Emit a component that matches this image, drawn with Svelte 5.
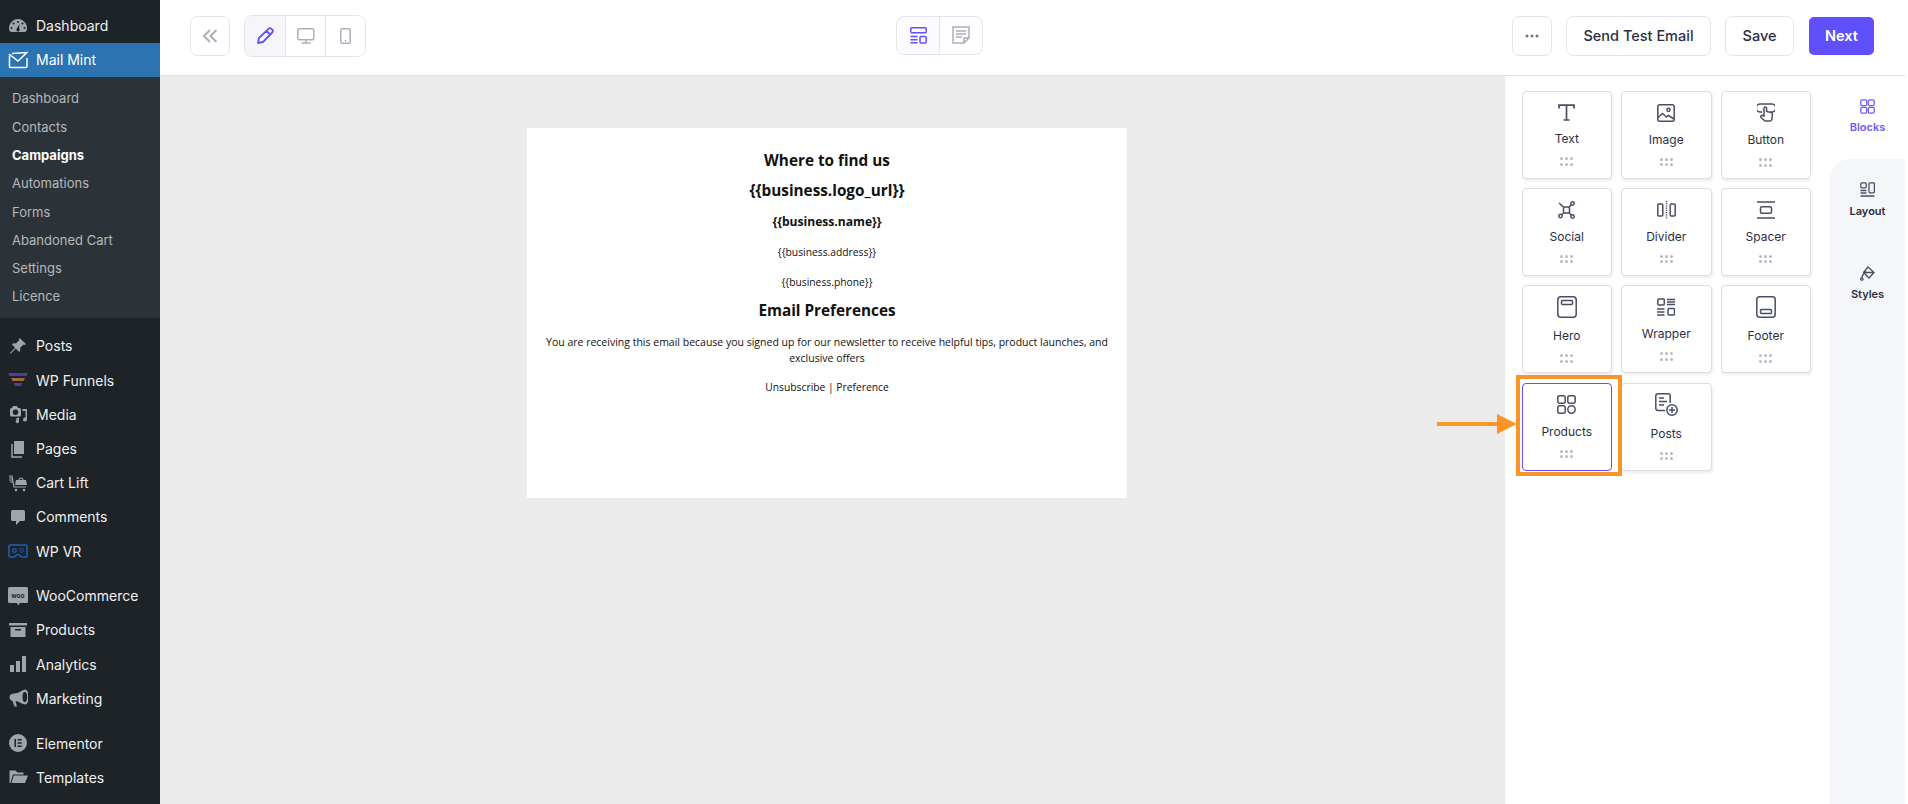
<script>
  const gray = '#a0a5aa';

  const menuIcons = {
    gauge: `<path fill="${gray}" fill-rule="evenodd" d="M10 3a9 9 0 0 0-8.600 11.600c.3.9 1 1.400 1.800 1.400h13.600c.8 0 1.500-.5 1.800-1.400A9 9 0 0 0 10 3zM10 5a1 1 0 1 1 0 2 1 1 0 0 1 0-2zM5.500 6.500a1 1 0 1 1 0 2 1 1 0 0 1 0-2zM14.500 6.500a1 1 0 1 1 0 2 1 1 0 0 1 0-2zM3.500 11a1 1 0 1 1 0 2 1 1 0 0 1 0-2zM16.500 11a1 1 0 1 1 0 2 1 1 0 0 1 0-2zM11.500 8l-.4 4.600a1.600 1.600 0 1 1-2.200 0z"/>`,
    mail: `<path fill="none" stroke="#fff" stroke-width="1.500" d="M1.500 5.500v11a1 1 0 0 0 1 1h15.500a1 1 0 0 0 1-1V8M1 4l9 7 9-8.500L4 3.500"/>`,
    pin: `<path fill="${gray}" d="M11.500 2l6.500 6-1.500 1-1-.5-3.500 3.500c.5 1.500.2 3-.8 4L7.800 12.500 3 17.500l-1 .2.300-1L7 11.700 3.800 8.300c1-1 2.500-1.300 4-.8L11.300 4l-.4-1z"/>`,
    funnel: `<path fill="#4f3d9e" d="M0 3h20l-1.600 3H1.600z"/><path fill="#a8673f" d="M3 8h14l-1.500 3h-11z"/><path fill="#4f3d9e" d="M5.500 13h9l-1.500 3H7z"/>`,
    media: `<path fill="${gray}" fill-rule="evenodd" d="M5 2h4l1 2h1.500A1.500 1.500 0 0 1 13 5.500V11a1.500 1.500 0 0 1-1.500 1.500h-8A1.500 1.500 0 0 1 2 11V5.500A1.500 1.500 0 0 1 3.500 4H4zM7.500 5.500a2.700 2.700 0 1 0 0 5.400 2.700 2.700 0 0 0 0-5.400z"/><path fill="${gray}" d="M14.500 5H19v10.500a2 2 0 1 1-1.500-1.900V7h-3zM8 14.500l3-1v4a1.700 1.700 0 1 1-1.500-1.700v-.5l-1.500.4z"/>`,
    pages: `<path fill="${gray}" d="M6 2h10v13H6z"/><path fill="none" stroke="${gray}" stroke-width="1.500" d="M4 5v13h10"/>`,
    cart: `<path fill="none" stroke="${gray}" stroke-width="1.200" d="M1 3h3l2 11h12M1 5h3M1 7h3.300M2 9h2.700"/><path fill="${gray}" d="M8 7h2.500a2.500 2.500 0 0 1 5 0H18l1 5H7zM11.500 7h3a1.500 1.500 0 0 0-3 0z"/><circle cx="8" cy="17" r="1.300" fill="${gray}"/><circle cx="16" cy="17" r="1.300" fill="${gray}"/>`,
    comment: `<path fill="${gray}" d="M4.500 3h11A1.500 1.500 0 0 1 17 4.500v8a1.500 1.500 0 0 1-1.500 1.500H12l-4 4v-4H4.500A1.500 1.500 0 0 1 3 12.500v-8A1.500 1.500 0 0 1 4.500 3z"/>`,
    vr: `<path fill="none" stroke="#2060b0" stroke-width="1.600" d="M2.500 4h15A1.500 1.500 0 0 1 19 5.500v9a1.500 1.500 0 0 1-1.500 1.500H14c-1.500 0-2-2.500-4-2.500S7.500 16 6 16H2.500A1.500 1.500 0 0 1 1 14.500v-9A1.500 1.500 0 0 1 2.500 4z"/><circle cx="6.500" cy="9.500" r="1.800" fill="none" stroke="#2060b0" stroke-width="1.300"/><circle cx="13.500" cy="9.500" r="1.800" fill="none" stroke="#2b3fa8" stroke-width="1.300"/>`,
    woo: `<path fill="${gray}" d="M1.500 1h17A1.500 1.500 0 0 1 20 2.500v13a1.500 1.500 0 0 1-1.500 1.500H12l-2 2.500-1-2.500H1.500A1.500 1.500 0 0 1 0 15.500v-13A1.500 1.500 0 0 1 1.500 1z"/><text x="10" y="11.500" font-size="6.500" font-weight="700" text-anchor="middle" fill="#1d2327" font-family="Liberation Sans, sans-serif">woo</text>`,
    box: `<path fill="${gray}" fill-rule="evenodd" d="M1 3h18v2.500H1zM2.500 7h15v10h-15zM7 9v1.500h6V9z"/>`,
    bars: `<path fill="${gray}" d="M2 11h4v7H2zM8 7h4v11H8zM14 2h4v16h-4z"/>`,
    megaphone: `<path fill="${gray}" fill-rule="evenodd" d="M17 1.500a4 7.500 0 0 1 0 15c-2 0-6-3-9.500-3.500L9 18.500H6.500L4.500 13C2.800 12.800 1.500 11 1.500 9s2-3.500 5-3.500c4 0 8.500-4 10.500-4zM16.800 4a2.300 5 0 1 0 0 10 2.300 5 0 0 0 0-10z"/>`,
    elementor: `<path fill="${gray}" fill-rule="evenodd" d="M10 1a9 9 0 1 0 0 18 9 9 0 0 0 0-18zM6.500 6H8v8H6.500zM9.500 6h4.200v1.500H9.500zM9.500 9.200h4.200v1.500H9.500zM9.500 12.500h4.200V14H9.500z"/>`,
    folder: `<path fill="${gray}" d="M1.500 3.500h6l2 2h6v2H5L2.500 16H1.500zM5.800 8.500H20L17 16H3.500z"/>`
  };

  const topMenu = [{ label: 'Dashboard', icon: 'gauge' }];
  const subMenu = ['Dashboard', 'Contacts', 'Campaigns', 'Automations', 'Forms', 'Abandoned Cart', 'Settings', 'Licence'];
  const menuGroups = [
    [
      { label: 'Posts', icon: 'pin' },
      { label: 'WP Funnels', icon: 'funnel' },
      { label: 'Media', icon: 'media' },
      { label: 'Pages', icon: 'pages' },
      { label: 'Cart Lift', icon: 'cart' },
      { label: 'Comments', icon: 'comment' },
      { label: 'WP VR', icon: 'vr' }
    ],
    [
      { label: 'WooCommerce', icon: 'woo' },
      { label: 'Products', icon: 'box' },
      { label: 'Analytics', icon: 'bars' },
      { label: 'Marketing', icon: 'megaphone' }
    ],
    [
      { label: 'Elementor', icon: 'elementor' },
      { label: 'Templates', icon: 'folder' }
    ]
  ];

  const blocks = [
    { label: 'Text', w: 17, h: 17, svg: `<path d="M1 4.500V1.200h15v3.300M8.500 1.200v15M5.500 16h6" stroke-width="1.700"/>` },
    { label: 'Image', w: 18, h: 18, svg: `<rect x=".8" y=".8" width="16.400" height="16.400" rx="2"/><circle cx="11.500" cy="5.800" r="1.600"/><path d="M1 13.500l4.500-4 4 3.500 2-1.500 5.500 3.500"/>` },
    { label: 'Button', w: 18, h: 19, svg: `<path d="M5 9H3.300A3.800 3.800 0 0 1 3.300 1h11.400a3.800 3.800 0 0 1 0 8H13"/><path d="M7 13V5.200a1.300 1.300 0 0 1 2.600 0V8.500l4.500 1c1 .2 1.500 1 1.300 2l-.6 5c-.1.800-.8 1.500-1.700 1.500H8.500c-.6 0-1-.2-1.400-.7L4 14.500c-1-1.500.8-2.800 2-1.700z"/>` },
    { label: 'Social', w: 17, h: 18, svg: `<rect x="5.500" y="6" width="6" height="6" rx="1.500"/><circle cx="14.500" cy="2.500" r="1.700"/><circle cx="2.500" cy="15" r="1.700"/><circle cx="14.500" cy="15.500" r="1.700"/><path d="M11 6.500l2.300-2.800M6 11.500l-2.300 2.300M11 11.500l2.300 2.800M6 6.500L1 2"/>` },
    { label: 'Divider', w: 19, h: 18, svg: `<rect x=".8" y="3" width="5" height="12" rx="1"/><rect x="13.200" y="3" width="5" height="12" rx="1"/><path d="M9.500 0v18" stroke-dasharray="1.200 1"/>` },
    { label: 'Spacer', w: 18, h: 18, svg: `<path d="M0 1h18M0 17h18"/><rect x="3.500" y="5.800" width="11" height="6.500" rx="1.500"/>` },
    { label: 'Hero', w: 20, h: 22, svg: `<rect x=".8" y=".8" width="18.400" height="20.400" rx="3"/><rect x="4.500" y="4.500" width="11" height="4" rx="1"/>` },
    { label: 'Wrapper', w: 18, h: 18, svg: `<rect x=".8" y="1" width="6.500" height="6" rx="1"/><path d="M10 1.500h8M10 4h8M10 6.500h8M0 11h7.500M0 14h7.500M0 17h7.500"/><rect x="11" y="10.500" width="6.500" height="6.500" rx="1"/>` },
    { label: 'Footer', w: 20, h: 22, svg: `<rect x=".8" y=".8" width="18.400" height="20.400" rx="3"/><rect x="4.500" y="13.500" width="11" height="4" rx="1"/>` },
    { label: 'Products', w: 19, h: 19, svg: `<rect x=".8" y=".8" width="7.400" height="7.400" rx="2"/><rect x="10.800" y=".8" width="7.400" height="7.400" rx="2"/><rect x=".8" y="10.800" width="7.400" height="7.400" rx="2"/><circle cx="14.500" cy="14.500" r="3.700"/>`, selected: true },
    { label: 'Posts', w: 23, h: 23, svg: `<path d="M10 17.500H3A2.200 2.200 0 0 1 .8 15.300V3A2.200 2.200 0 0 1 3 .8h10A2.200 2.200 0 0 1 15.200 3v7"/><path d="M4 5h5M4 8.500h8M4 12h5"/><circle cx="17" cy="17" r="5.200"/><path d="M17 14v6M14 17h6"/>` }
  ];

  const tabs = [
    { label: 'Blocks', active: true, svg: `<rect x=".8" y=".8" width="5.900" height="5.900" rx="1.500"/><rect x="8.300" y=".8" width="5.900" height="5.900" rx="1.500"/><rect x=".8" y="8.300" width="5.900" height="5.900" rx="1.500"/><rect x="8.300" y="8.300" width="5.900" height="5.900" rx="1.500"/>` },
    { label: 'Layout', svg: `<rect x=".8" y=".8" width="5.400" height="5" rx="1"/><rect x="9" y=".8" width="5.400" height="10" rx="1"/><path d="M.5 8.500h6M.5 11h6M.5 14h14"/>` },
    { label: 'Styles', svg: `<path d="M8 1l6 5.500-5 5.500-5.500-5.500zM3.500 6.500L8 1M3.500 6.500h10"/><circle cx="1.800" cy="13" r="1.200"/><path d="M1.800 11.800C2 9 4 7.500 6 5.500"/>` }
  ];
</script>

<div class="shell">
  <nav class="sidebar">
    {#each topMenu as item}
      <div class="menu-item">
        <svg class="menu-icon" width="20" height="20" viewBox="0 0 20 20">{@html menuIcons[item.icon]}</svg>
        <span>{item.label}</span>
      </div>
    {/each}
    <div class="menu-item current">
      <svg class="menu-icon" width="20" height="20" viewBox="0 0 20 20">{@html menuIcons.mail}</svg>
      <span>Mail Mint</span>
    </div>
    <ul class="submenu">
      {#each subMenu as label}
        <li class:on={label === 'Campaigns'}>{label}</li>
      {/each}
    </ul>
    {#each menuGroups as group}
      <div class="menu-group">
        {#each group as item}
          <div class="menu-item">
            <svg class="menu-icon" width="20" height="20" viewBox="0 0 20 20">{@html menuIcons[item.icon]}</svg>
            <span>{item.label}</span>
          </div>
        {/each}
      </div>
    {/each}
  </nav>

  <div class="main">
    <header class="topbar">
      <div class="top-left">
        <button class="icon-btn" aria-label="Back">
          <svg width="16" height="14" viewBox="0 0 16 14" fill="none" stroke="#aeadbb" stroke-width="2"><path d="M8 1L2 7l6 6M14.500 1l-6 6 6 6"/></svg>
        </button>
        <div class="btn-group">
          <span class="cell active">
            <svg width="17" height="17" viewBox="0 0 17 17" fill="none" stroke="#5f50fb" stroke-width="1.800" stroke-linejoin="round"><path d="M1 16l1-5L11.500 1.800a2 2 0 0 1 2.800 0l.9.9a2 2 0 0 1 0 2.800L6 15zM9.500 4l3.500 3.500"/></svg>
          </span>
          <span class="cell">
            <svg width="18" height="16" viewBox="0 0 18 16" fill="none" stroke="#aeadbb" stroke-width="1.500"><rect x=".8" y=".8" width="16" height="11" rx="1.500"/><path d="M9 12v3M4.500 15h9"/></svg>
          </span>
          <span class="cell">
            <svg width="11" height="16" viewBox="0 0 11 16" fill="none" stroke="#aeadbb" stroke-width="1.500"><rect x=".8" y=".8" width="9.400" height="14.400" rx="1.500"/><path d="M4.800 12.800h1.400"/></svg>
          </span>
        </div>
      </div>

      <div class="btn-group view">
        <span class="cell active-soft">
          <svg width="17" height="17" viewBox="0 0 17 17" fill="none" stroke="#5f50fb" stroke-width="1.500"><rect x=".8" y=".8" width="15.400" height="5" rx="1"/><rect x="10" y="9.500" width="6.200" height="6.500" rx="1"/><path d="M.5 9.500h7M.5 12.700h7M.5 15.800h7"/></svg>
        </span>
        <span class="cell">
          <svg width="18" height="18" viewBox="0 0 18 18" fill="none" stroke="#aeadbb" stroke-width="1.500"><path d="M1 1h16v11l-5 5H1zM4 5h10M4 8h10M4 11h6M17 12h-5v5"/></svg>
        </span>
      </div>

      <div class="top-right">
        <button class="icon-btn" aria-label="More">
          <svg width="14" height="4" viewBox="0 0 14 4" fill="#73737f"><circle cx="2" cy="2" r="1.500"/><circle cx="7" cy="2" r="1.500"/><circle cx="12" cy="2" r="1.500"/></svg>
        </button>
        <button class="text-btn">Send Test Email</button>
        <button class="text-btn">Save</button>
        <button class="next-btn">Next</button>
      </div>
    </header>

    <div class="workspace">
      <section class="canvas">
        <article class="email">
          <h3 class="find">Where to find us</h3>
          <h3 class="logo">{'{{business.logo_url}}'}</h3>
          <h4>{'{{business.name}}'}</h4>
          <p class="address">{'{{business.address}}'}</p>
          <p class="phone">{'{{business.phone}}'}</p>
          <h3 class="prefs">Email Preferences</h3>
          <p class="notice">You are receiving this email because you signed up for our newsletter to receive helpful tips, product launches, and exclusive offers</p>
          <p class="links">Unsubscribe | Preference</p>
        </article>
      </section>

      <aside class="panel">
        <div class="blocks">
          {#each blocks as block}
            <div class="block" class:selected={block.selected}>
              <svg width={block.w} height={block.h} viewBox="0 0 {block.w} {block.h}" fill="none" stroke="#4a4e64" stroke-width="1.500">{@html block.svg}</svg>
              <span class="block-label">{block.label}</span>
              <span class="grip">
                {#each Array(6) as _}<i></i>{/each}
              </span>
            </div>
          {/each}
          <div class="arrow"></div>
        </div>
        <div class="tabs">
          {#each tabs as tab}
            <div class="tab" class:active={tab.active}>
              <svg width="15" height="15" viewBox="0 0 15 15" fill="none" stroke={tab.active ? '#6a5cfb' : '#4a4e64'} stroke-width="1.300">{@html tab.svg}</svg>
              <span>{tab.label}</span>
            </div>
          {/each}
        </div>
      </aside>
    </div>
  </div>
</div>

<style>
  :global(body) {
    background: #fff;
    overflow: hidden;
  }

  .shell {
    display: flex;
    width: 1908px;
    height: 804px;
    overflow: hidden;
    font-family: Inter, "Liberation Sans", sans-serif;
  }

  .sidebar {
    flex: 0 0 160px;
    padding-top: 8.500px;
    background: #1d2327;
    color: #f0f0f1;
  }

  .menu-item {
    display: flex;
    align-items: center;
    height: 34.200px;
    font-size: 14px;
  }

  .menu-icon {
    flex: none;
    margin: 0 8px;
  }

  .current {
    background: #2b73b1;
    color: #fff;
  }

  .submenu {
    margin: 0 0 11px;
    padding: 7.500px 0 0;
    height: 241px;
    box-sizing: border-box;
    list-style: none;
    background: #2c3338;
  }

  .submenu li {
    height: 28.300px;
    line-height: 28.300px;
    padding-left: 12px;
    font-size: 13px;
    color: #b4b9be;
  }

  .submenu li.on {
    color: #fff;
    font-weight: 700;
  }

  .menu-group {
    margin-bottom: 10.500px;
  }

  .main {
    flex: 1;
    display: flex;
    flex-direction: column;
    min-width: 0;
    padding-right: 3px;
  }

  .topbar {
    display: grid;
    grid-template-columns: 706px auto 1fr;
    align-items: center;
    height: 76px;
    box-sizing: border-box;
    padding: 0 31px 4px 30px;
    background: #fff;
    border-bottom: 1px solid #e2e2e2;
  }

  .top-left,
  .top-right {
    display: flex;
    align-items: center;
    gap: 14px;
  }

  .top-right {
    justify-self: end;
  }

  .icon-btn {
    display: flex;
    align-items: center;
    justify-content: center;
    width: 40px;
    height: 40px;
    padding: 0;
    background: #fff;
    border: 1px solid #e4e4ec;
    border-radius: 7px;
  }

  .btn-group {
    display: flex;
    height: 42px;
    box-sizing: border-box;
    border: 1px solid #e4e4ec;
    border-radius: 8px;
    overflow: hidden;
  }

  .btn-group.view {
    height: 39px;
    margin-top: -1px;
  }

  .cell {
    display: flex;
    align-items: center;
    justify-content: center;
    width: 40px;
    box-sizing: border-box;
    border-left: 1px solid #e4e4ec;
  }

  .cell:first-child {
    border-left: 0;
  }

  .cell.active {
    background: #f6f6fa;
  }

  .view .cell {
    width: 43px;
  }

  .view .cell.active-soft {
    background: #fbfbff;
    width: 42px;
  }

  .text-btn {
    height: 40px;
    padding: 0 16.500px;
    background: #fff;
    border: 1px solid #e4e4ec;
    border-radius: 7px;
    font: 450 14.500px Inter, "Liberation Sans", sans-serif;
    color: #2c2f44;
  }

  .next-btn {
    width: 65px;
    height: 38px;
    padding: 0;
    margin-left: 1px;
    background: #5f50fb;
    border: 0;
    border-radius: 5px;
    font: 600 14.500px Inter, "Liberation Sans", sans-serif;
    color: #fff;
  }

  .workspace {
    flex: 1;
    display: flex;
    min-height: 0;
  }

  .canvas {
    flex: 1;
    padding: 52px 0 0 367px;
    background: #ebebeb;
  }

  .email {
    width: 600px;
    height: 370px;
    padding: 20px 16px 0;
    box-sizing: border-box;
    background: #fff;
    color: #111;
    text-align: center;
    font-family: "Open Sans", "DejaVu Sans", sans-serif;
  }

  .email h3,
  .email h4,
  .email p {
    margin: 0;
  }

  .email h3 {
    font-size: 15.300px;
    font-weight: 700;
    line-height: 24px;
  }

  .email .logo {
    margin-top: 6px;
  }

  .email h4 {
    margin-top: 10px;
    font-size: 12.100px;
    font-weight: 700;
    line-height: 20px;
  }

  .email p {
    font-size: 10.300px;
    line-height: 16px;
  }

  .email .address {
    margin-top: 12px;
  }

  .email .phone {
    margin-top: 14px;
  }

  .email .prefs {
    margin-top: 8px;
  }

  .email .notice {
    margin-top: 12px;
    font-size: 10.500px;
  }

  .email .links {
    margin-top: 13px;
  }

  .panel {
    flex: 0 0 400px;
    display: flex;
    background: #fff;
  }

  .blocks {
    position: relative;
    flex: 0 0 325px;
    display: grid;
    grid-template-columns: repeat(3, 90.500px);
    grid-auto-rows: 88px;
    gap: 9.200px 9px;
    align-content: start;
    box-sizing: border-box;
    padding: 15px 0 0 16.500px;
  }

  .block {
    position: relative;
    display: flex;
    flex-direction: column;
    align-items: center;
    justify-content: center;
    background: #fff;
    border: 1px solid #dcdce1;
    border-radius: 4px;
    box-shadow: 1px 2px 3px rgba(30, 30, 60, 0.08);
  }

  .block.selected {
    border-color: #5f50fb;
    z-index: 1;
    box-shadow: none;
  }

  /* orange callout drawn on the screenshot */
  .block.selected::after {
    content: '';
    position: absolute;
    left: -7px;
    right: -11px;
    top: -9px;
    bottom: -6px;
    border: 4px solid #fb9527;
  }

  .arrow {
    position: absolute;
    left: -68px;
    top: 346px;
    width: 60px;
    height: 4px;
    background: #fb9527;
  }

  .arrow::after {
    content: '';
    position: absolute;
    left: 60px;
    top: -8px;
    border-left: 20px solid #fb9527;
    border-top: 10px solid transparent;
    border-bottom: 10px solid transparent;
  }

  .block-label {
    margin-top: 10px;
    font-size: 12px;
    line-height: 16px;
    color: #2c2f44;
  }

  .grip {
    display: grid;
    grid-template-columns: repeat(3, 3px);
    gap: 2.500px 2px;
    margin-top: 10px;
  }

  .grip i {
    width: 3px;
    height: 3px;
    border-radius: 50%;
    background: #b9b9c6;
  }

  .tabs {
    flex: 1;
    position: relative;
    display: flex;
    flex-direction: column;
    align-items: center;
    padding-top: 22.500px;
    background: linear-gradient(#fff 83px, #f5f6f9 83px);
  }

  .tabs::before {
    content: '';
    position: absolute;
    left: 0;
    top: 83px;
    width: 100%;
    height: 24px;
    background: #f5f6f9;
    border-top-left-radius: 20px;
    box-shadow: -20px 0 0 #fff;
  }

  .tab {
    position: relative;
    display: flex;
    flex-direction: column;
    align-items: center;
    gap: 6.500px;
    height: 83.500px;
    font-size: 11px;
    font-weight: 600;
    line-height: 14px;
    color: #2c2f44;
  }

  .tab.active {
    color: #6a5cfb;
  }
</style>
